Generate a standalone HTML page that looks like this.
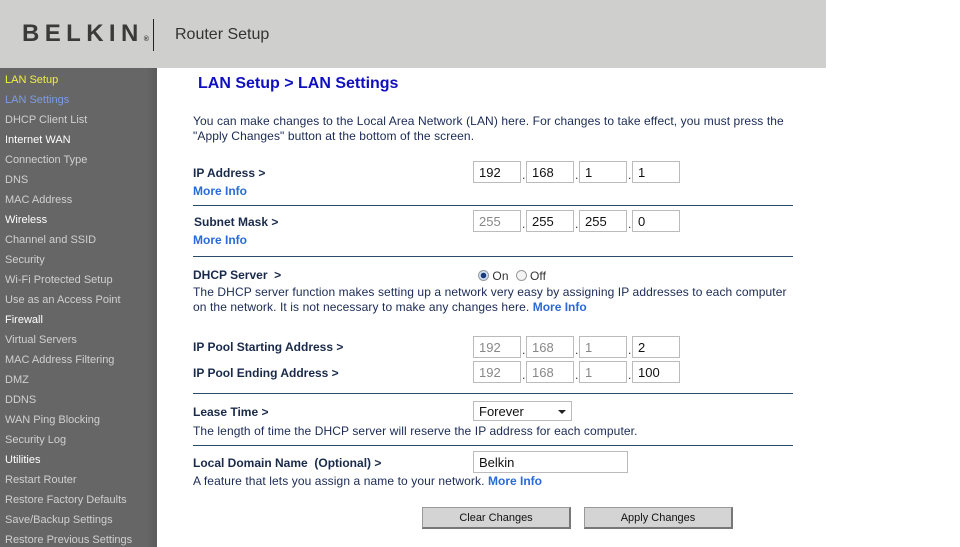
<!DOCTYPE html>
<html><head><style>
*{margin:0;padding:0;box-sizing:border-box}
body{width:960px;height:547px;background:#fff;position:relative;overflow:hidden;font-family:"Liberation Sans",Arial,sans-serif}
.a{position:absolute;white-space:nowrap}
#hdr{left:0;top:0;width:826px;height:68px;background:#cfcfcd}
#side{left:0;top:68px;width:157px;height:479px;background:linear-gradient(to right,#666 0,#666 146px,#5c5c5c 157px)}
.s{position:absolute;left:5px;font-size:11px;color:#d0d0d0}
.s.w{color:#fff}
.l{font-size:12px;font-weight:bold;color:#1a2a4a}
.t{font-size:12px;color:#1a2a55;letter-spacing:0.1px}
.m{color:#2a6ad8;font-weight:bold;font-size:12px;letter-spacing:0}
.in{position:absolute;height:22px;border:1px solid #bbb;font-size:13px;padding:3px 5px;color:#111;background:#fff}
.in.g{color:#888}
.d{position:absolute;font-size:12px;color:#333}
.hr{position:absolute;left:193px;width:600px;height:1px;background:#2a4a6a}
.btn{position:absolute;top:507px;height:22px;width:149px;background:#d4d4d4;border:1px solid #999;border-right:2px solid #777;border-bottom:2px solid #777;font-size:11px;text-align:center;line-height:20px;color:#111}
.r{display:inline-block;width:11px;height:11px;border-radius:50%;border:1px solid #999;vertical-align:-1px;background:#f4f4f4}
</style></head><body>
<div id="hdr" class="a"></div>
<div class="a" style="left:22px;top:20px;font-size:24px;font-weight:bold;letter-spacing:5.4px;color:#3a3a3a">BELKIN<span style="font-size:7px;letter-spacing:0">®</span></div>
<div class="a" style="left:153px;top:19px;width:1px;height:32px;background:#222"></div>
<div class="a" style="left:175px;top:26px;font-size:16px;color:#333">Router Setup</div>
<div id="side" class="a"></div>
<div class="s" style="top:74px;color:#f0f040">LAN Setup</div>
<div class="s" style="top:94px;color:#7f9ae8">LAN Settings</div>
<div class="s" style="top:114px">DHCP Client List</div>
<div class="s w" style="top:134px">Internet WAN</div>
<div class="s" style="top:154px">Connection Type</div>
<div class="s" style="top:174px">DNS</div>
<div class="s" style="top:194px">MAC Address</div>
<div class="s w" style="top:214px">Wireless</div>
<div class="s" style="top:234px">Channel and SSID</div>
<div class="s" style="top:254px">Security</div>
<div class="s" style="top:274px">Wi-Fi Protected Setup</div>
<div class="s" style="top:294px">Use as an Access Point</div>
<div class="s w" style="top:314px">Firewall</div>
<div class="s" style="top:334px">Virtual Servers</div>
<div class="s" style="top:354px">MAC Address Filtering</div>
<div class="s" style="top:374px">DMZ</div>
<div class="s" style="top:394px">DDNS</div>
<div class="s" style="top:414px">WAN Ping Blocking</div>
<div class="s" style="top:434px">Security Log</div>
<div class="s w" style="top:454px">Utilities</div>
<div class="s" style="top:474px">Restart Router</div>
<div class="s" style="top:494px">Restore Factory Defaults</div>
<div class="s" style="top:514px">Save/Backup Settings</div>
<div class="s" style="top:534px">Restore Previous Settings</div>

<div class="a" style="left:198px;top:75px;font-size:16px;font-weight:bold;color:#1010c0">LAN Setup &gt; LAN Settings</div>
<div class="a t" style="left:193px;top:114px;line-height:15px">You can make changes to the Local Area Network (LAN) here. For changes to take effect, you must press the<br>"Apply Changes" button at the bottom of the screen.</div>

<div class="a l" style="left:193px;top:166px">IP Address &gt;</div>
<div class="a m" style="left:193px;top:184px">More Info</div>
<div class="in" style="left:473px;top:161px;width:48px">192</div><div class="d" style="left:522px;top:168px">.</div>
<div class="in" style="left:526px;top:161px;width:48px">168</div><div class="d" style="left:575px;top:168px">.</div>
<div class="in" style="left:579px;top:161px;width:48px">1</div><div class="d" style="left:628px;top:168px">.</div>
<div class="in" style="left:632px;top:161px;width:48px">1</div>
<div class="hr" style="top:205px"></div>

<div class="a l" style="left:194px;top:215px">Subnet Mask &gt;</div>
<div class="a m" style="left:193px;top:233px">More Info</div>
<div class="in g" style="left:473px;top:210px;width:48px">255</div><div class="d" style="left:522px;top:217px">.</div>
<div class="in" style="left:526px;top:210px;width:48px">255</div><div class="d" style="left:575px;top:217px">.</div>
<div class="in" style="left:579px;top:210px;width:48px">255</div><div class="d" style="left:628px;top:217px">.</div>
<div class="in" style="left:632px;top:210px;width:48px">0</div>
<div class="hr" style="top:256px"></div>

<div class="a l" style="left:193px;top:268px">DHCP Server &nbsp;&gt;</div>
<div class="a t" style="left:478px;top:269px;color:#333"><span class="r" style="background:radial-gradient(circle,#1a3a7a 0 2.5px,#cfe0f4 3px)"></span> On &nbsp;<span class="r"></span> Off</div>
<div class="a t" style="left:193px;top:285px;line-height:15px">The DHCP server function makes setting up a network very easy by assigning IP addresses to each computer<br>on the network. It is not necessary to make any changes here. <span class="m">More Info</span></div>

<div class="a l" style="left:193px;top:340px">IP Pool Starting Address &gt;</div>
<div class="in g" style="left:473px;top:336px;width:48px">192</div><div class="d" style="left:522px;top:343px">.</div>
<div class="in g" style="left:526px;top:336px;width:48px">168</div><div class="d" style="left:575px;top:343px">.</div>
<div class="in g" style="left:579px;top:336px;width:48px">1</div><div class="d" style="left:628px;top:343px">.</div>
<div class="in" style="left:632px;top:336px;width:48px">2</div>
<div class="a l" style="left:193px;top:366px">IP Pool Ending Address &gt;</div>
<div class="in g" style="left:473px;top:361px;width:48px">192</div><div class="d" style="left:522px;top:368px">.</div>
<div class="in g" style="left:526px;top:361px;width:48px">168</div><div class="d" style="left:575px;top:368px">.</div>
<div class="in g" style="left:579px;top:361px;width:48px">1</div><div class="d" style="left:628px;top:368px">.</div>
<div class="in" style="left:632px;top:361px;width:48px">100</div>
<div class="hr" style="top:393px"></div>

<div class="a l" style="left:193px;top:405px">Lease Time &gt;</div>
<div class="in" style="left:473px;top:401px;width:99px;height:20px;padding:2px 5px">Forever<span style="position:absolute;right:5px;top:8px;border:4px solid transparent;border-top:4px solid #222;border-bottom:0"></span></div>
<div class="a t" style="left:193px;top:424px">The length of time the DHCP server will reserve the IP address for each computer.</div>
<div class="hr" style="top:445px"></div>

<div class="a l" style="left:193px;top:456px">Local Domain Name &nbsp;(Optional) &gt;</div>
<div class="in" style="left:473px;top:451px;width:155px">Belkin</div>
<div class="a t" style="left:193px;top:474px">A feature that lets you assign a name to your network. <span class="m">More Info</span></div>

<div class="btn" style="left:422px">Clear Changes</div>
<div class="btn" style="left:584px">Apply Changes</div>
</body></html>
